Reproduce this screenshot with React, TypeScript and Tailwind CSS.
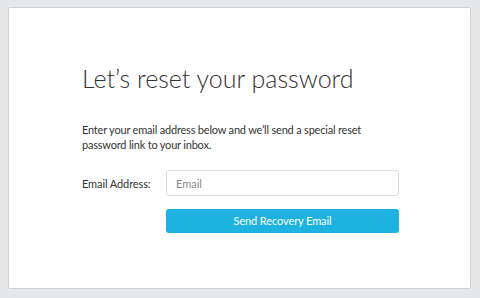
import React from "react";

export default function App() {
  return (
    <div className="w-[480px] h-[298px] bg-[#e6e7e8] pt-[7px] pl-[8px]" style={{ fontFamily: 'Lato, "Open Sans", sans-serif' }}>
      <div className="w-[463px] h-[282px] bg-white border border-[#cfd0d1] rounded-[2px] pl-[73px] pt-[56px]">
        <h1 className="text-[25px] leading-[28px] font-light text-[#333]">Let’s reset your password</h1>
        <p className="mt-[30px] w-[290px] text-[11px] leading-[15px] tracking-[-0.2px] text-[#333]">
          Enter your email address below and we’ll send a special reset password link to your inbox.
        </p>
        <div className="mt-[18px] flex items-center">
          <label className="w-[84px] text-[11px] leading-[15px] tracking-[-0.1px] text-[#333]">Email Address:</label>
          <input
            placeholder="Email"
            className="w-[233px] h-[26px] border border-[#dedede] rounded-[3px] px-[9px] text-[11px] placeholder:text-[#888] outline-none"
          />
        </div>
        <button className="mt-[13px] ml-[84px] w-[233px] h-[24px] bg-[#1eb2e0] rounded-[3px] text-white text-[11px] tracking-[-0.1px] leading-[24px] text-center">
          Send Recovery Email
        </button>
      </div>
    </div>
  );
}
